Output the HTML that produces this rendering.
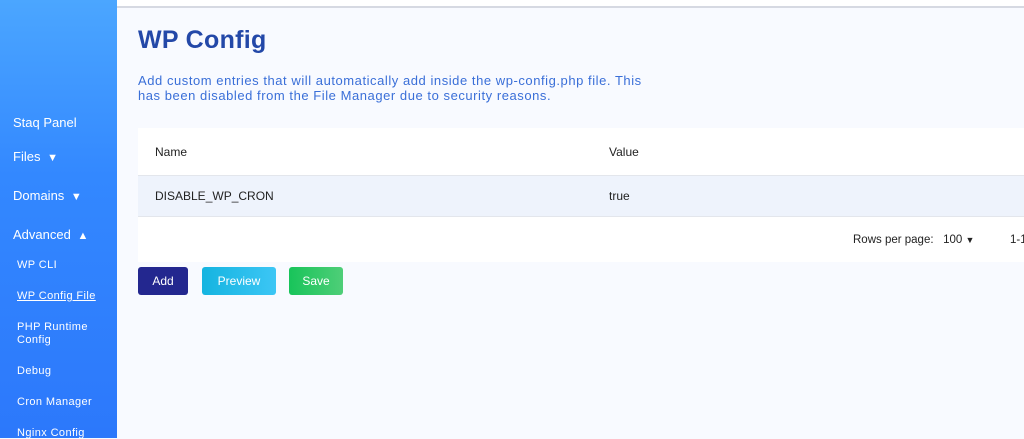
<!DOCTYPE html>
<html><head><style>
body{margin:0;width:1024px;height:438px;overflow:hidden;background:#f8faff;font-family:"Liberation Sans",sans-serif;position:relative}
.sb{position:absolute;left:0;top:0;width:117px;height:438px;background:linear-gradient(180deg,#4ba6ff 0%,#3388ff 40%,#2c78fb 100%);color:#fff}
.sb div{position:absolute;white-space:nowrap}
.m{left:13px;font-size:13px}
.s{left:17px;font-size:11px;letter-spacing:0.4px}
.ar{font-size:11px;margin-left:3px}
.top{position:absolute;left:117px;top:0;right:0;height:6px;background:#fff;border-bottom:2px solid #d6d9e2}
h1{position:absolute;left:138px;top:26px;margin:0;font-size:25px;color:#2348a8;font-weight:bold;letter-spacing:0.3px}
.d{position:absolute;left:138px;top:73px;font-size:13px;letter-spacing:0.55px;color:#3a6fd8;line-height:15px;white-space:nowrap}
.t{position:absolute;left:138px;top:128px;right:0;height:134px;background:#fff;font-size:12px;color:#222}
.t div{position:absolute;white-space:nowrap}
.btn{position:absolute;top:267px;height:28px;border-radius:3px;color:#fff;font-size:12px;line-height:28px;text-align:center}
</style></head><body>
<div class="sb">
<div class="m" style="top:115px">Staq Panel</div>
<div class="m" style="top:149px">Files <span class="ar">▼</span></div>
<div class="m" style="top:188px">Domains <span class="ar">▼</span></div>
<div class="m" style="top:227px">Advanced <span class="ar">▲</span></div>
<div class="s" style="top:259px">WP CLI</div>
<div class="s" style="top:290px;text-decoration:underline">WP Config File</div>
<div class="s" style="top:321px;line-height:13px">PHP Runtime<br>Config</div>
<div class="s" style="top:365px">Debug</div>
<div class="s" style="top:396px">Cron Manager</div>
<div class="s" style="top:427px">Nginx Config</div>
</div>
<div class="top"></div>
<h1>WP Config</h1>
<div class="d">Add custom entries that will automatically add inside the wp-config.php file. This<br>has been disabled from the File Manager due to security reasons.</div>
<div class="t">
<div style="left:0;right:0;top:47px;height:40px;background:#eef3fc;border-top:1px solid #e3e6ec;border-bottom:1px solid #e3e6ec"></div>
<div style="left:17px;top:17px">Name</div>
<div style="left:471px;top:17px">Value</div>
<div style="left:17px;top:61px">DISABLE_WP_CRON</div>
<div style="left:471px;top:61px">true</div>
<div style="left:715px;top:106px;font-size:11.5px">Rows per page:&nbsp;&nbsp;&nbsp;100 <span style="font-size:9px">▼</span></div>
<div style="left:872px;top:106px;font-size:11.5px">1-1</div>
</div>
<div class="btn" style="left:138px;width:50px;background:#23278f">Add</div>
<div class="btn" style="left:202px;width:74px;background:linear-gradient(90deg,#15b4e0,#3cc6f5)">Preview</div>
<div class="btn" style="left:289px;width:54px;background:linear-gradient(90deg,#18c45a,#4fce78)">Save</div>
</body></html>
